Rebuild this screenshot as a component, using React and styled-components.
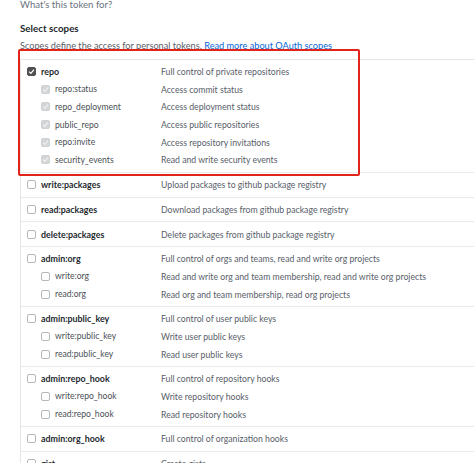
import React from "react";
import styled, { createGlobalStyle } from "styled-components";

const GlobalStyle = createGlobalStyle`
  html, body {
    margin: 0;
    padding: 0;
    background: #fff;
  }
  body {
    font-family: Lato, "Open Sans", "Liberation Sans", sans-serif;
    color: #24292e;
  }
`;

const Page = styled.div`
  position: relative;
  width: 474px;
  height: 463px;
  padding-left: 20px;
  box-sizing: border-box;
  overflow: hidden;
`;

const Note = styled.p`
  margin: 0;
  font-size: 9.6px;
  line-height: 10px;
  color: #6a737d;
`;

const Title = styled.h3`
  margin: 11px 0 0;
  font-size: 9.8px;
  font-weight: 700;
  line-height: 14px;
  color: #24292e;
`;

const Lead = styled.p`
  margin: 5px 0 0;
  font-size: 9.2px;
  line-height: 12px;
  color: #586069;
  white-space: nowrap;
`;

const Link = styled.a`
  color: #0366d6;
  text-decoration: none;
`;

const List = styled.div`
  margin-top: 7px;
  width: 470px;
  border-left: 1px solid #e4e6e8;
  border-top: 1px solid #e4e6e8;
`;

const Group = styled.div`
  padding: 3px 0 3.2px;
  & + & {
    border-top: 1px solid #e8eaec;
  }
`;

const Row = styled.div`
  display: grid;
  grid-template-columns: 140px 1fr;
  align-items: center;
  height: 17.6px;
  font-size: 8.7px;
  white-space: nowrap;
`;

const NameCell = styled.label`
  display: flex;
  align-items: center;
  gap: 5px;
  padding-left: ${(p) => (p.$sub ? 20 : 6)}px;
  font-weight: ${(p) => (p.$sub ? 400 : 700)};
  font-size: ${(p) => (p.$sub ? 8.6 : 8.9)}px;
  color: ${(p) => (p.$sub ? "#4a4f55" : "#24292e")};
`;

const Desc = styled.span`
  color: #586069;
`;

const Box = styled.span`
  display: inline-flex;
  align-items: center;
  justify-content: center;
  flex: none;
  width: 9px;
  height: 9px;
  border-radius: 2px;
  box-sizing: border-box;
  border: 1px solid
    ${(p) => (p.$checked ? (p.$disabled ? "#cfd1d3" : "#4d4f52") : "#b5b8bb")};
  background: ${(p) =>
    p.$checked ? (p.$disabled ? "#d3d5d7" : "#4d4f52") : "#fff"};
`;

const Highlight = styled.div`
  position: absolute;
  left: 18px;
  top: 49px;
  width: 342px;
  height: 127px;
  box-sizing: border-box;
  border: 2px solid #e2231a;
  border-radius: 2px;
  pointer-events: none;
`;

function Check({ checked, disabled }) {
  return (
    <Box $checked={checked} $disabled={disabled}>
      {checked ? (
        <svg width="7" height="7" viewBox="0 0 8 8">
          <path
            d="M1.2 4.2 L3.2 6.1 L6.9 1.8"
            fill="none"
            stroke={disabled ? "#eef0f1" : "#fff"}
            strokeWidth="1.4"
          />
        </svg>
      ) : null}
    </Box>
  );
}

const groups = [
  {
    name: "repo",
    desc: "Full control of private repositories",
    checked: true,
    subs: [
      ["repo:status", "Access commit status"],
      ["repo_deployment", "Access deployment status"],
      ["public_repo", "Access public repositories"],
      ["repo:invite", "Access repository invitations"],
      ["security_events", "Read and write security events"],
    ],
  },
  { name: "write:packages", desc: "Upload packages to github package registry", subs: [] },
  { name: "read:packages", desc: "Download packages from github package registry", subs: [] },
  { name: "delete:packages", desc: "Delete packages from github package registry", subs: [] },
  {
    name: "admin:org",
    desc: "Full control of orgs and teams, read and write org projects",
    subs: [
      ["write:org", "Read and write org and team membership, read and write org projects"],
      ["read:org", "Read org and team membership, read org projects"],
    ],
  },
  {
    name: "admin:public_key",
    desc: "Full control of user public keys",
    subs: [
      ["write:public_key", "Write user public keys"],
      ["read:public_key", "Read user public keys"],
    ],
  },
  {
    name: "admin:repo_hook",
    desc: "Full control of repository hooks",
    subs: [
      ["write:repo_hook", "Write repository hooks"],
      ["read:repo_hook", "Read repository hooks"],
    ],
  },
  { name: "admin:org_hook", desc: "Full control of organization hooks", subs: [] },
  { name: "gist", desc: "Create gists", subs: [] },
];

export default function App() {
  return (
    <Page>
      <GlobalStyle />
      <Note>What's this token for?</Note>
      <Title>Select scopes</Title>
      <Lead>
        Scopes define the access for personal tokens. <Link href="#">Read more about OAuth scopes</Link>
      </Lead>
      <List>
        {groups.map((g) => (
          <Group key={g.name}>
            <Row>
              <NameCell>
                <Check checked={!!g.checked} />
                {g.name}
              </NameCell>
              <Desc>{g.desc}</Desc>
            </Row>
            {g.subs.map(([name, desc]) => (
              <Row key={name}>
                <NameCell $sub>
                  <Check checked={!!g.checked} disabled />
                  {name}
                </NameCell>
                <Desc>{desc}</Desc>
              </Row>
            ))}
          </Group>
        ))}
      </List>
      <Highlight />
    </Page>
  );
}
